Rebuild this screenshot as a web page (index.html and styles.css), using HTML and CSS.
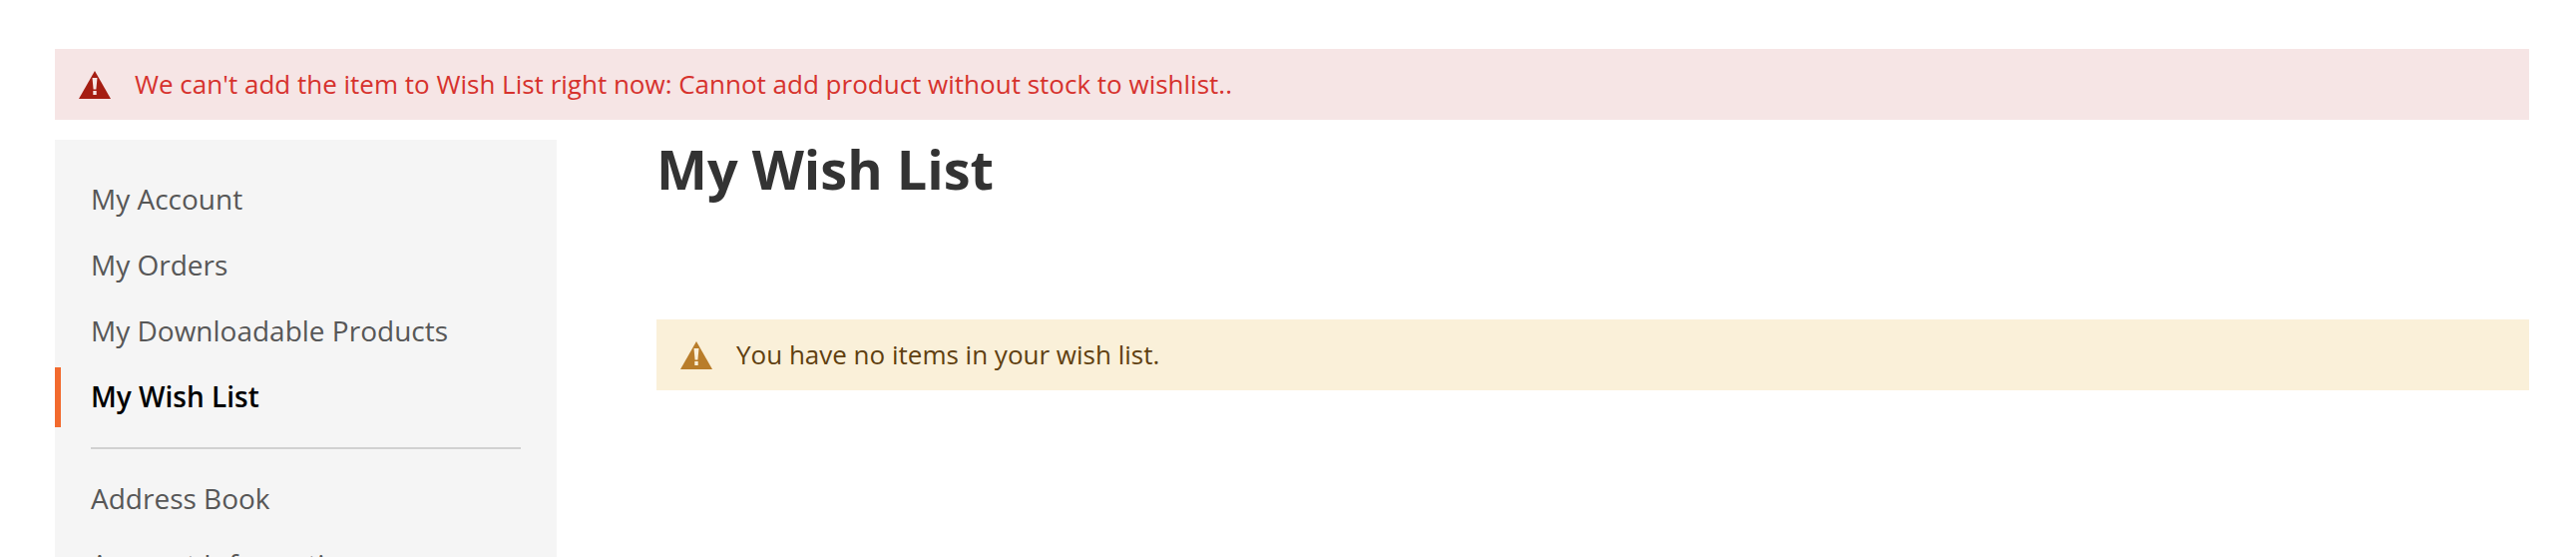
FILE: index.html
```html
<!DOCTYPE html>
<html lang="en">
<head>
  <meta charset="UTF-8" />
  <title>My Wish List</title>
  <link rel="stylesheet" href="styles.css">
</head>
<body>
  <div class="mesaj hata">
    <svg class="ikon" viewBox="0 0 32 28" aria-hidden="true">
      <path class="ucgen" d="M16 0 L32 28 L0 28 Z" />
      <path class="isaret" d="M13.5 7 H18.5 L17.4 18.5 H14.6 Z M14.3 20 H17.7 V24 H14.3 Z" />
    </svg>
    <span>We can't add the item to Wish List right now: Cannot add product without stock to wishlist..</span>
  </div>

  <div class="sayfa">
    <nav class="yan-menu">
      <a href="#">My Account</a>
      <a href="#">My Orders</a>
      <a href="#">My Downloadable Products</a>
      <a href="#" class="aktif">My Wish List</a>
      <hr class="ayrac" />
      <a href="#">Address Book</a>
      <a href="#">Account Information</a>
    </nav>

    <main class="icerik">
      <h1>My Wish List</h1>
      <div class="mesaj uyari">
        <svg class="ikon" viewBox="0 0 32 28" aria-hidden="true">
          <path class="ucgen" d="M16 0 L32 28 L0 28 Z" />
          <path class="isaret" d="M13.5 7 H18.5 L17.4 18.5 H14.6 Z M14.3 20 H17.7 V24 H14.3 Z" />
        </svg>
        <span>You have no items in your wish list.</span>
      </div>
    </main>
  </div>
</body>
</html>
```

FILE: styles.css
```css
* {
  margin: 0;
  padding: 0;
  box-sizing: border-box;
}

html,
body {
  height: 558px;
  overflow: hidden;
}

body {
  font-family: "Open Sans", sans-serif;
  background: #fff;
  padding: 49px 47px 0 55px;
}

/* Hata ve uyari kutulari */
.mesaj {
  display: flex;
  align-items: center;
  gap: 24px;
  height: 71px;
  padding-left: 24px;
  font-size: 26px;
}

.mesaj span {
  padding-bottom: 2px;
}

.ikon {
  width: 32px;
  height: 28px;
  flex-shrink: 0;
}

.hata {
  background: #f6e5e5;
  color: #d6322d;
}

.hata .ucgen {
  fill: #a51d12;
}

.hata .isaret {
  fill: #f6e5e5;
}

.uyari {
  background: #faf0d9;
  color: #5f3f10;
}

.uyari .ucgen {
  fill: #b97d2a;
}

.uyari .isaret {
  fill: #faf0d9;
}

.sayfa {
  display: flex;
  margin-top: 20px;
}

.yan-menu {
  width: 503px;
  flex-shrink: 0;
  background: #f5f5f5;
  padding: 27px 0;
  display: flex;
  flex-direction: column;
}

.yan-menu a {
  display: block;
  height: 66px;
  line-height: 64px;
  padding-left: 36px;
  font-size: 28px;
  color: #575757;
  text-decoration: none;
}

.yan-menu a.aktif {
  height: 60px;
  line-height: 58px;
  margin: 3px 0;
  padding-left: 30px;
  border-left: 6px solid #f26a2e;
  color: #000;
  font-weight: 600;
}

.ayrac {
  border: none;
  border-top: 2px solid #d1d1d1;
  margin: 17px 36px;
}

.icerik {
  flex: 1;
  margin-left: 100px;
}

h1 {
  font-size: 54px;
  font-weight: 700;
  line-height: 58px;
  color: #333;
  margin-bottom: 122px;
}
```
